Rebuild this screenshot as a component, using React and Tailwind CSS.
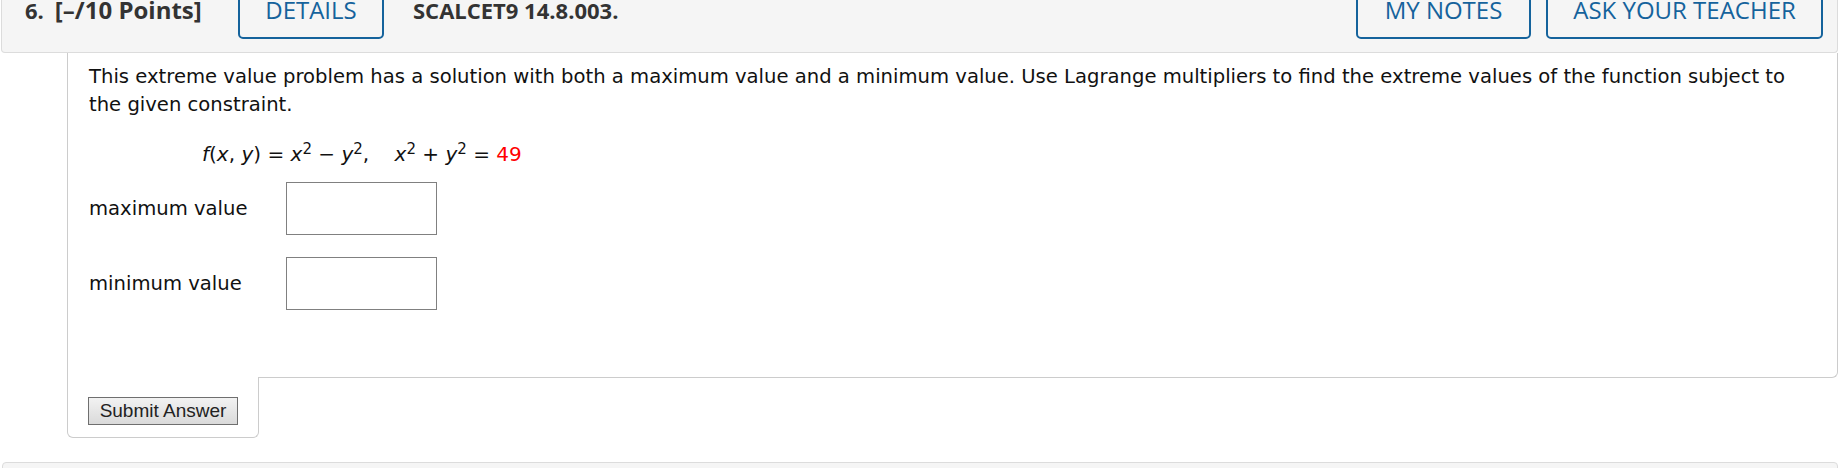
export default function App() {
  return (
    <div className="w-[1840px] h-[468px] overflow-hidden bg-white text-[#111]">
      {/* question header */}
      <div className="ml-px mr-[2px] h-[53px] bg-[#f5f5f5] border border-t-0 border-[#dcdcdc] rounded-b-[4px] flex items-start font-['Open_Sans',sans-serif] text-[#333]">
        <div className="ml-[23px] w-[213px] -mt-px flex text-[22px] leading-[22px] font-bold">
          <span>6.</span>
          <span className="ml-[11px] text-[24px]">[–/10 Points]</span>
        </div>
        <button className="-mt-[19px] h-[58px] w-[146px] border-2 border-[#15639c] rounded-[5px] text-[#15639c] text-[24px] leading-none">
          DETAILS
        </button>
        <span className="ml-[29px] -mt-px text-[22px] leading-[22px] font-bold">SCALCET9 14.8.003.</span>
        <div className="flex-1" />
        <button className="-mt-[19px] h-[58px] w-[175px] border-2 border-[#15639c] rounded-[5px] text-[#15639c] text-[24px] leading-none">
          MY NOTES
        </button>
        <button className="ml-[15px] mr-[14px] -mt-[19px] h-[58px] w-[277px] border-2 border-[#15639c] rounded-[5px] text-[#15639c] text-[24px] leading-none">
          ASK YOUR TEACHER
        </button>
      </div>

      {/* question body */}
      <div className="ml-[67px] mr-[2px] font-['DejaVu_Sans',Verdana,sans-serif] text-[19.6px]">
        <div className="h-[325px] border border-t-0 border-[#cccccc] rounded-br-[6px] pl-[21px] pt-[10px]">
          <p className="w-[1710px] leading-[28px]">
            This extreme value problem has a solution with both a maximum value and a minimum value. Use Lagrange
            multipliers to find the extreme values of the function subject to the given constraint.
          </p>
          <div className="mt-[21px] ml-[113px] text-[20px] leading-[28px] whitespace-pre">
            <i>f</i>(<i>x</i>, <i>y</i>) = <i>x</i><sup>2</sup> − <i>y</i><sup>2</sup>,    <i>x</i><sup>2</sup> + <i>y</i>
            <sup>2</sup> = <span className="text-[#ff0000]">49</span>
          </div>
          <div className="mt-[14px] flex items-center">
            <span className="w-[197px]">maximum value</span>
            <input className="w-[151px] h-[53px] border border-[#808080] bg-white" />
          </div>
          <div className="mt-[22px] flex items-center">
            <span className="w-[197px]">minimum value</span>
            <input className="w-[151px] h-[53px] border border-[#808080] bg-white" />
          </div>
        </div>
        <div className="relative -mt-px w-[192px] h-[61px] bg-white border border-t-0 border-[#cccccc] rounded-b-[6px] pl-[20px] pt-[19px]">
          <button className="w-[150px] h-[28px] border border-[#6f6f6f] bg-linear-to-b from-[#f2f2f2] to-[#dadada] text-[19px] leading-none text-[#222] font-['Liberation_Sans',Arial,sans-serif]">
            Submit Answer
          </button>
        </div>
      </div>

      {/* next question header */}
      <div className="mt-[24px] ml-[2px] mr-[2px] h-[40px] bg-[#f5f5f5] border border-[#dcdcdc] rounded-t-[4px]" />
    </div>
  );
}
